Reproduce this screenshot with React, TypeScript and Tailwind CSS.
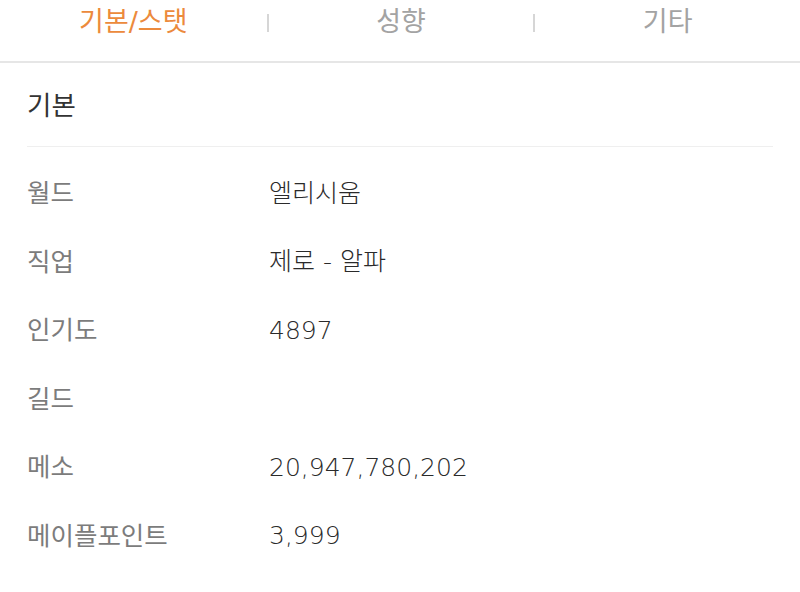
const tabs = ["기본/스탯", "성향", "기타"];

const rows: { label: string; value: string }[] = [
  { label: "월드", value: "엘리시움" },
  { label: "직업", value: "제로 - 알파" },
  { label: "인기도", value: "4897" },
  { label: "길드", value: "" },
  { label: "메소", value: "20,947,780,202" },
  { label: "메이플포인트", value: "3,999" },
];

export default function App() {
  return (
    <div
      className="h-[592px] w-[800px] bg-white"
      style={{ fontFamily: '"DejaVu Sans", "Noto Sans CJK KR", sans-serif' }}
    >
      <div className="flex h-[63px] items-start border-b-2 border-[#e6e6e6] pt-[6px]">
        {tabs.map((tab, i) => (
          <div key={tab} className="flex flex-1 items-center">
            {i > 0 && <div className="mt-[1px] h-[18px] w-[2px] bg-[#d6d6d6]" />}
            <div
              className={`flex-1 text-center text-[27px] leading-[32px] ${
                i === 0 ? "text-[#ec8a3c]" : "text-[#a3a3a3]"
              }`}
            >
              {tab}
            </div>
          </div>
        ))}
      </div>

      <div className="px-[27px]">
        <div className="flex h-[84px] items-center pt-[3px] border-b border-[#efefef] text-[26.5px] text-[#333333]">
          기본
        </div>
        <div className="pt-[12px]">
          {rows.map((row) => (
            <div key={row.label} className="flex h-[68.5px] items-center text-[25.5px]">
              <div className="w-[242px] text-[#7c7c7c]">{row.label}</div>
              <div className="text-[25px] font-light text-[#2a2a2a]">{row.value}</div>
            </div>
          ))}
        </div>
      </div>
    </div>
  );
}
